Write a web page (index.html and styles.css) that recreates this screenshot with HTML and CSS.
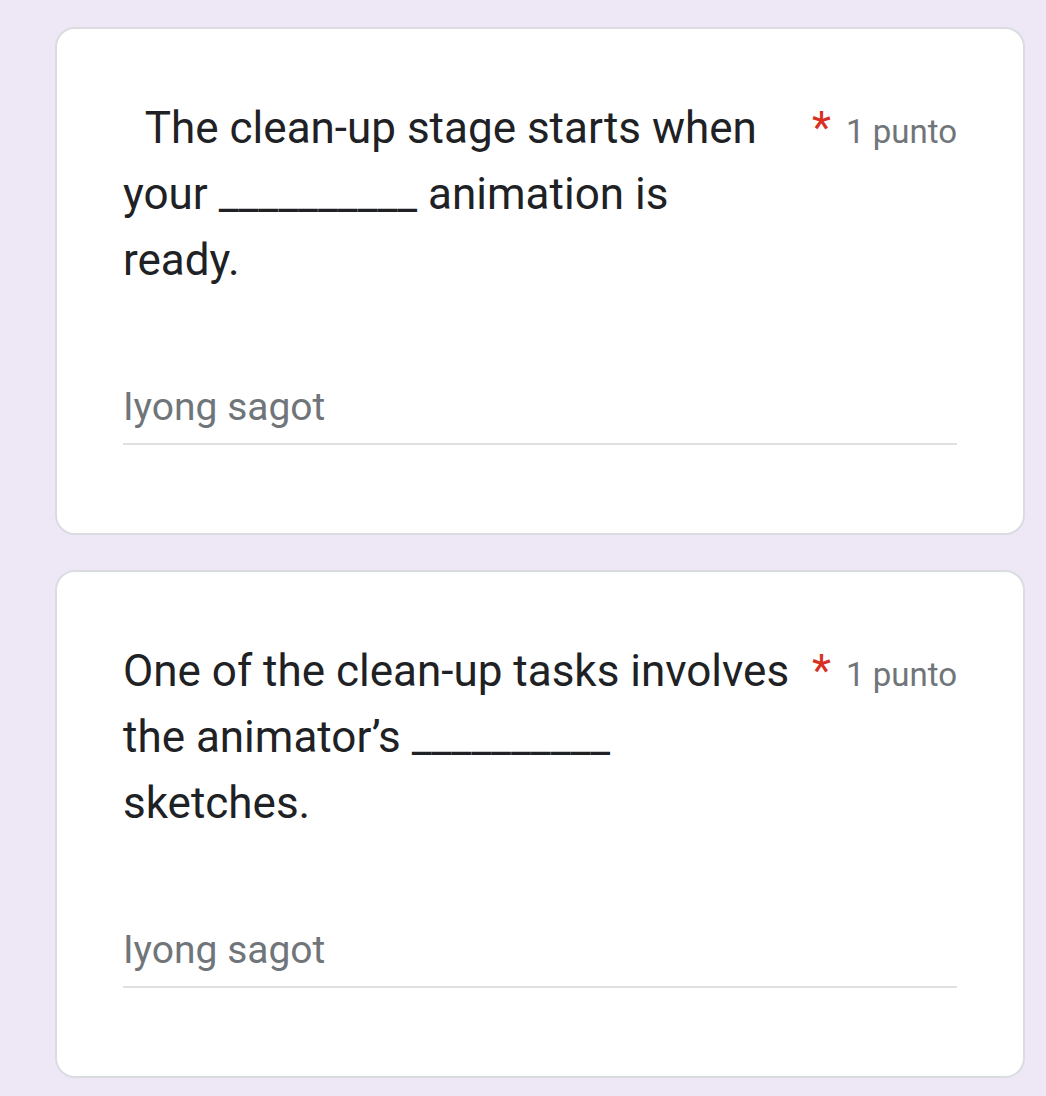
FILE: index.html
```html
<!DOCTYPE html>
<html lang="tl">
<head>
  <meta charset="UTF-8">
  <title>Clean-up Quiz</title>
  <link rel="stylesheet" href="styles.css">
</head>
<body>

  <form class="quiz">
    <div class="card">
      <div class="title-row">
        <div class="question">&nbsp;&nbsp;The clean-up stage starts when your __________ animation is ready.</div>
        <span class="required">*</span>
        <span class="points">1 punto</span>
      </div>
      <input type="text" class="answer" name="q1" placeholder="Iyong sagot">
    </div>

    <div class="card">
      <div class="title-row">
        <div class="question">One of the clean-up tasks involves the animator’s __________ sketches.</div>
        <span class="required">*</span>
        <span class="points">1 punto</span>
      </div>
      <input type="text" class="answer" name="q2" placeholder="Iyong sagot">
    </div>
  </form>

</body>
</html>
```

FILE: styles.css
```css
* {
  box-sizing: border-box;
}

body {
  margin: 0;
  padding: 27px 21px 18px 55px;
  background-color: #ede7f6;
  font-family: Roboto, "Liberation Sans", Arial, sans-serif;
  color: #202124;
}

.quiz {
  display: flex;
  flex-direction: column;
  gap: 35px;
}

.card {
  background-color: #fff;
  border: 2px solid #dadce0;
  border-radius: 20px;
  padding: 66px 66px 88px 66px;
}

.title-row {
  display: flex;
  align-items: baseline;
}

/* fixed column so the question wraps the same way in every card */
.question {
  flex: 0 0 670px;
  font-size: 44px;
  line-height: 66px;
}

.required {
  color: #d93025;
  font-size: 44px;
  line-height: 66px;
  margin-left: 19px;
}

.points {
  color: #70757a;
  font-size: 33px;
  margin-left: auto;
  white-space: nowrap;
}

.answer {
  display: block;
  width: 100%;
  height: 65px;
  margin-top: 87px;
  padding: 0 0 10px;
  border: none;
  border-bottom: 2px solid #e0e0e0;
  background: transparent;
  font-family: Roboto, "Liberation Sans", Arial, sans-serif;
  font-size: 39px;
  color: #202124;
  outline: none;
}

.answer::placeholder {
  color: #70757a;
}
```
